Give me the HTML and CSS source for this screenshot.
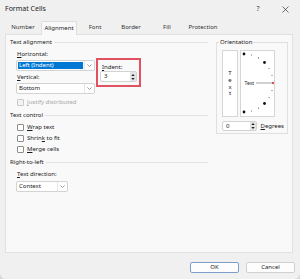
FILE: index.html
```html
<!DOCTYPE html>
<html>
	<head>
		<meta charset="utf-8" />
		<title>Format Cells</title>
		<link rel="stylesheet" href="styles.css">
	</head>
	<body>
		<div class="dialog">
			<!--title bar-->
			<div class="titlebar">
				<span class="title">Format Cells</span>
				<span class="help">?</span>
				<svg class="close" width="7" height="7" viewBox="0 0 7 7"><path d="M0.5 0.5L6.5 6.5M6.5 0.5L0.5 6.5" stroke="#333" stroke-width="0.7" fill="none"/></svg>
			</div>
			<!--tabs-->
			<div class="tabs">
				<span class="tab">Number</span>
				<span class="tab active">Alignment</span>
				<span class="tab">Font</span>
				<span class="tab">Border</span>
				<span class="tab">Fill</span>
				<span class="tab">Protection</span>
			</div>
			<!--alignment page-->
			<div class="panel">
				<div class="left">
					<div class="group-head">Text alignment</div>
					<div class="align-row">
						<div class="align-fields">
							<div class="label"><u>H</u>orizontal:</div>
							<div class="select focused">
								<span class="value">Left (Indent)</span>
								<span class="arrow"><svg width="5" height="3" viewBox="0 0 5 3"><polyline points="0.4,0.4 2.5,2.5 4.6,0.4" fill="none" stroke="#777" stroke-width="0.7"/></svg></span>
							</div>
							<div class="label gap"><u>V</u>ertical:</div>
							<div class="select">
								<span class="value">Bottom</span>
								<span class="arrow"><svg width="5" height="3" viewBox="0 0 5 3"><polyline points="0.4,0.4 2.5,2.5 4.6,0.4" fill="none" stroke="#777" stroke-width="0.7"/></svg></span>
							</div>
						</div>
						<div class="indent">
							<div class="label"><u>I</u>ndent:</div>
							<div class="spin">
								<span class="value">3</span>
								<span class="spinner"><svg width="4" height="8" viewBox="0 0 4 8"><path d="M0.3 3L2 1L3.7 3Z M0.3 5L2 7L3.7 5Z" fill="#222"/></svg></span>
							</div>
						</div>
					</div>
					<div class="check disabled"><span class="box"></span><span><u>J</u>ustify distributed</span></div>

					<div class="group-head section">Text control</div>
					<div class="check first"><span class="box"></span><span><u>W</u>rap text</span></div>
					<div class="check"><span class="box"></span><span>Shrin<u>k</u> to fit</span></div>
					<div class="check"><span class="box"></span><span><u>M</u>erge cells</span></div>

					<div class="group-head section">Right-to-left</div>
					<div class="dir">
						<div class="label"><u>T</u>ext direction:</div>
						<div class="select">
							<span class="value">Context</span>
							<span class="arrow"><svg width="5" height="3" viewBox="0 0 5 3"><polyline points="0.4,0.4 2.5,2.5 4.6,0.4" fill="none" stroke="#777" stroke-width="0.7"/></svg></span>
						</div>
					</div>
				</div>

				<fieldset class="orientation">
					<legend>Orientation</legend>
					<div class="orient-row">
						<div class="vtext"><span>T</span><span>e</span><span>x</span><span>t</span></div>
						<div class="arc">
							<svg width="33" height="65" viewBox="0 0 33 65">
								<g fill="#111">
									<circle cx="3" cy="3" r="1.4"/>
									<circle cx="23.5" cy="11.5" r="1.4"/>
									<circle cx="23.5" cy="52.5" r="1.4"/>
									<circle cx="3" cy="61" r="1.4"/>
								</g>
								<g fill="#555">
									<circle cx="10.5" cy="4" r="0.55"/>
									<circle cx="17.5" cy="6.9" r="0.55"/>
									<circle cx="28.1" cy="17.5" r="0.55"/>
									<circle cx="31" cy="24.5" r="0.55"/>
									<circle cx="31" cy="39.5" r="0.55"/>
									<circle cx="28.1" cy="46.5" r="0.55"/>
									<circle cx="17.5" cy="57.1" r="0.55"/>
									<circle cx="10.5" cy="60" r="0.55"/>
								</g>
								<line x1="15" y1="32" x2="31" y2="32" stroke="#666" stroke-width="0.6"/>
								<circle cx="32" cy="32" r="1.2" fill="#d6505a"/>
								<text x="3.5" y="33.8" class="arc-label">Text</text>
							</svg>
						</div>
					</div>
					<div class="deg-row">
						<div class="spin">
							<span class="value">0</span>
							<span class="spinner"><svg width="4" height="8" viewBox="0 0 4 8"><path d="M0.3 3L2 1L3.7 3Z M0.3 5L2 7L3.7 5Z" fill="#222"/></svg></span>
						</div>
						<span><u>D</u>egrees</span>
					</div>
				</fieldset>
			</div>
			<!--buttons-->
			<div class="buttons">
				<button class="btn default">OK</button>
				<button class="btn">Cancel</button>
			</div>
		</div>
	</body>
</html>
```

FILE: styles.css
```css
*{
	box-sizing: border-box;
}
body{
	margin: 0;
	background: #d8d8d8;
	font-family: "Segoe UI", "Noto Sans", "Open Sans", sans-serif;
	font-size: 6px;
	line-height: 8px;
	color: #1b1b1b;
}
u{
	text-underline-offset: 1px;
}
.dialog{
	display: flex;
	flex-direction: column;
	width: 300px;
	height: 279px;
	background: #f0f0f0;
	border-radius: 0 0 6px 6px;
	overflow: hidden;
}
.titlebar{
	display: flex;
	align-items: center;
	height: 21px;
	padding: 0 11px 3px 5px;
}
.title{
	flex: 1;
	font-size: 7px;
}
.help{
	width: 10px;
	margin-right: 19px;
	text-align: center;
	font-size: 7px;
	color: #444;
}
.close{
	display: block;
}
.tabs{
	display: flex;
	align-items: flex-end;
	height: 13px;
	padding-left: 5px;
}
.tab{
	width: 36px;
	height: 13px;
	line-height: 13px;
	text-align: center;
	color: #333;
}
.tab.active{
	position: relative;
	height: 14px;
	margin-bottom: -1px;
	line-height: 12px;
	background: #f9f9f9;
	border: 1px solid #dedede;
	border-bottom: 0;
	border-radius: 2px 2px 0 0;
	color: #1b1b1b;
}
.panel{
	display: flex;
	height: 219px;
	margin: 0 7px 0 5px;
	padding-top: 3px;
	background: #f9f9f9;
	border: 1px solid #e0e0e0;
}
.left{
	width: 202px;
	padding-left: 4px;
}
.group-head{
	display: flex;
	align-items: center;
	gap: 2px;
	height: 8px;
}
.group-head:after{
	content: "";
	flex: 1;
	height: 1px;
	background: #e3e3e3;
}
.section{
	margin-top: 5px;
}
.label{
	height: 8px;
	padding-left: 1px;
	white-space: nowrap;
}
.align-row{
	display: flex;
	align-items: flex-start;
	margin-top: 4px;
	padding-left: 6px;
}
.align-fields{
	width: 79px;
}
.align-fields .gap{
	margin-top: 2px;
}
.select{
	display: flex;
	height: 11px;
	margin-top: 2px;
	background: #fff;
	border: 1px solid #d3d3d3;
	border-radius: 2px;
}
.select .value{
	flex: 1;
	padding-left: 2px;
	line-height: 9px;
	white-space: nowrap;
}
.select .arrow{
	display: flex;
	align-items: center;
	justify-content: center;
	width: 10px;
	border-left: 1px solid #e6e6e6;
}
.select .arrow svg{
	display: block;
}
.select.focused .value{
	margin: 1px;
	padding-left: 1px;
	line-height: 7px;
	background: #0078d4;
	color: #fff;
}
.indent{
	width: 45px;
	margin: 8px 0 0 1px;
	padding: 3px 2px;
	border: 2px solid #e0525f;
}
.indent .label{
	padding-left: 2px;
}
.spin{
	display: flex;
	height: 11px;
	background: #fff;
	border: 1px solid #d3d3d3;
	border-radius: 2px;
	overflow: hidden;
}
.spin .value{
	flex: 1;
	padding-left: 3px;
	line-height: 9px;
}
.spinner{
	display: flex;
	align-items: center;
	justify-content: center;
	width: 6px;
	background: #e4e4e4;
}
.spinner svg{
	display: block;
}
.check{
	display: flex;
	align-items: center;
	gap: 3px;
	height: 8px;
	margin-top: 3px;
	padding-left: 7px;
	white-space: nowrap;
}
.check.disabled{
	margin-top: 4px;
	color: #a8a8a8;
}
.check.first{
	margin-top: 4px;
}
.check .box{
	width: 7px;
	height: 7px;
	background: #fff;
	border: 1px solid #8c8c8c;
	border-radius: 1px;
}
.check.disabled .box{
	background: #f3f3f3;
	border-color: #cacaca;
}
.dir{
	margin-top: 4px;
	padding-left: 6px;
}
.dir .select{
	width: 52px;
	margin-top: 3px;
}
.orientation{
	align-self: flex-start;
	width: 72px;
	min-width: 0;
	margin: 0 0 0 8px;
	padding: 4px 3px 2px 5px;
	border: 1px solid #e0e0e0;
}
.orientation legend{
	margin-left: -3px;
	padding: 0 1px;
	line-height: 8px;
}
.orient-row{
	display: flex;
	gap: 2px;
}
.vtext{
	display: flex;
	flex-direction: column;
	align-items: center;
	justify-content: center;
	width: 16px;
	height: 67px;
	line-height: 6.7px;
	background: #fff;
	border: 1px solid #d6d6d6;
}
.arc{
	width: 35px;
	height: 67px;
	background: #fff;
	border: 1px solid #d6d6d6;
}
.arc svg{
	display: block;
}
.arc-label{
	font-family: "Segoe UI", "Noto Sans", sans-serif;
	font-size: 5px;
	fill: #1b1b1b;
}
.deg-row{
	display: flex;
	align-items: center;
	gap: 4px;
	margin-top: 4px;
	white-space: nowrap;
}
.deg-row .spin{
	width: 35px;
	height: 10px;
}
.deg-row .spin .value{
	line-height: 8px;
}
.buttons{
	display: flex;
	justify-content: flex-end;
	gap: 7px;
	padding: 9px 5px 0;
}
.btn{
	width: 49px;
	height: 11px;
	padding: 0;
	font-family: inherit;
	font-size: 6px;
	line-height: 9px;
	color: #1b1b1b;
	text-align: center;
	background: #fdfdfd;
	border: 1px solid #d0d0d0;
	border-radius: 2px;
}
.btn.default{
	border-color: #7c9fca;
}
```
